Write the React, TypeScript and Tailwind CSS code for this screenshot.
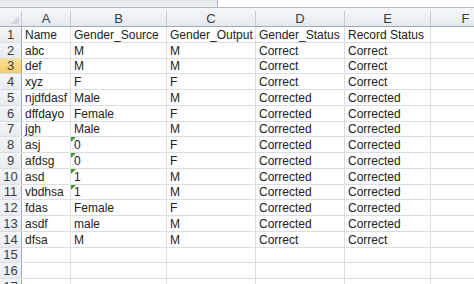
import React from "react";

const rows: (string[] | null)[] = [
  ["Name", "Gender_Source", "Gender_Output", "Gender_Status", "Record Status"],
  ["abc", "M", "M", "Correct", "Correct"],
  ["def", "M", "M", "Correct", "Correct"],
  ["xyz", "F", "F", "Correct", "Correct"],
  ["njdfdasf", "Male", "M", "Corrected", "Corrected"],
  ["dffdayo", "Female", "F", "Corrected", "Corrected"],
  ["jgh", "Male", "M", "Corrected", "Corrected"],
  ["asj", "0", "F", "Corrected", "Corrected"],
  ["afdsg", "0", "F", "Corrected", "Corrected"],
  ["asd", "1", "M", "Corrected", "Corrected"],
  ["vbdhsa", "1", "M", "Corrected", "Corrected"],
  ["fdas", "Female", "F", "Corrected", "Corrected"],
  ["asdf", "male", "M", "Corrected", "Corrected"],
  ["dfsa", "M", "M", "Correct", "Correct"],
  null,
  null,
  null,
];

const widths = ["w-[49px]", "w-[96px]", "w-[89px]", "w-[89px]", "w-[86px]", "w-[70px]"];
const letters = ["A", "B", "C", "D", "E", "F"];

export default function App() {
  return (
    <div
      className="w-[474px] h-[284px] overflow-hidden bg-white text-[#222222]"
      style={{ fontFamily: '"Liberation Sans", Arial, sans-serif' }}
    >
      {/* formula bar bottom */}
      <div className="flex h-[8px] border-b border-[#b4bac2]">
        <div className="w-[218px] shrink-0 bg-gradient-to-b from-[#e3e7ed] to-[#eef1f5] border-r border-[#a9b0b9]" />
        <div className="flex-1 bg-white" />
      </div>
      <div className="h-[3px] bg-[#f4f6f9]" />
      {/* column header */}
      <div className="flex h-[16px] border-b border-[#9eabbb] bg-gradient-to-b from-[#f3f5f8] to-[#e5e9ef]">
        <div className="relative w-[22px] shrink-0 border-r border-[#c5ccd5]">
          <div className="absolute right-[2px] bottom-[2px] w-0 h-0 border-l-[8px] border-l-transparent border-b-[8px] border-b-[#d2d8df]" />
        </div>
        {letters.map((l, i) => (
          <div
            key={l}
            className={`${widths[i]} shrink-0 border-r border-[#c5ccd5] flex items-center justify-center text-[13px] leading-[14px] text-[#3c3c3c]`}
          >
            {l}
          </div>
        ))}
      </div>
      {rows.map((r, ri) => {
        const sel = ri === 2;
        return (
          <div key={ri} className="flex h-[15.75px] border-b border-[#dadee4]">
            <div
              className={`w-[22px] shrink-0 flex items-end justify-center text-[13px] leading-[15px] border-r ${
                sel
                  ? "bg-gradient-to-b from-[#f9df9a] to-[#f4cc6c] border-[#c29b3e] text-[#3c3c3c]"
                  : "bg-gradient-to-b from-[#f3f5f8] to-[#e8ecf1] border-[#9eabbb] text-[#3c3c3c]"
              }`}
            >
              {ri + 1}
            </div>
            {letters.map((l, ci) => {
              const v = r ? r[ci] ?? "" : "";
              const tri = ci === 1 && ri >= 7 && ri <= 10;
              return (
                <div
                  key={l}
                  className={`${widths[ci]} relative shrink-0 border-r border-[#dadee4] flex items-end pl-[3px] text-[12px] leading-[14px] whitespace-nowrap overflow-visible`}
                >
                  {tri && (
                    <div className="absolute left-0 top-0 w-0 h-0 border-t-[5px] border-t-[#3a9a3a] border-r-[5px] border-r-transparent" />
                  )}
                  {v}
                </div>
              );
            })}
          </div>
        );
      })}
    </div>
  );
}
